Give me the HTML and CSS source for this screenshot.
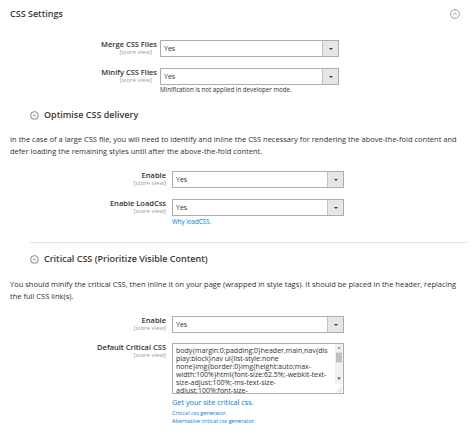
FILE: index.html
```html
<!DOCTYPE html>
<html lang="en">
<head>
<meta charset="utf-8">
<title>CSS Settings</title>
<link rel="stylesheet" href="styles.css">
</head>
<body>
<div class="page">
  <div class="section-head">
    <h2 class="section-title">CSS Settings</h2>
    <span class="toggle toggle-lg"><svg viewBox="0 0 10 10"><circle cx="5" cy="5" r="4.4"/><polyline points="3.3,5.8 5,4.1 6.7,5.8"/></svg></span>
  </div>

  <div class="fields fields-top">
    <div class="field">
      <div class="label"><span class="label-text">Merge CSS Files</span><span class="scope">[store view]</span></div>
      <div class="control">
        <div class="select"><span class="select-value">Yes</span><span class="select-arrow"></span></div>
      </div>
    </div>
    <div class="field">
      <div class="label"><span class="label-text">Minify CSS Files</span><span class="scope">[store view]</span></div>
      <div class="control">
        <div class="select"><span class="select-value">Yes</span><span class="select-arrow"></span></div>
        <p class="note">Minification is not applied in developer mode.</p>
      </div>
    </div>
  </div>

  <div class="sub-head sub-head-first">
    <span class="toggle toggle-sm"><svg viewBox="0 0 10 10"><circle cx="5" cy="5" r="4.3"/><polyline points="3.3,5.9 5,4.2 6.7,5.9"/></svg></span>
    <h3 class="sub-title">Optimise CSS delivery</h3>
  </div>
  <p class="desc">In the case of a large CSS file, you will need to identify and inline the CSS necessary for rendering the above-the-fold content and<br>defer loading the remaining styles until after the above-the-fold content.</p>

  <div class="fields fields-sub">
    <div class="field">
      <div class="label"><span class="label-text">Enable</span><span class="scope">[store view]</span></div>
      <div class="control">
        <div class="select"><span class="select-value">Yes</span><span class="select-arrow"></span></div>
      </div>
    </div>
    <div class="field">
      <div class="label"><span class="label-text">Enable LoadCss</span><span class="scope">[store view]</span></div>
      <div class="control">
        <div class="select"><span class="select-value">Yes</span><span class="select-arrow"></span></div>
        <a class="link note-link" href="#">Why loadCSS.</a>
      </div>
    </div>
  </div>

  <div class="divider"></div>

  <div class="sub-head sub-head-second">
    <span class="toggle toggle-sm"><svg viewBox="0 0 10 10"><circle cx="5" cy="5" r="4.3"/><polyline points="3.3,5.9 5,4.2 6.7,5.9"/></svg></span>
    <h3 class="sub-title">Critical CSS (Prioritize Visible Content)</h3>
  </div>
  <p class="desc desc-second">You should minify the critical CSS, then inline it on your page (wrapped in style tags). It should be placed in the header, replacing<br>the full CSS link(s).</p>

  <div class="fields fields-sub">
    <div class="field">
      <div class="label"><span class="label-text">Enable</span><span class="scope">[store view]</span></div>
      <div class="control">
        <div class="select"><span class="select-value">Yes</span><span class="select-arrow"></span></div>
      </div>
    </div>
    <div class="field field-gap">
      <div class="label"><span class="label-text">Default Critical CSS</span><span class="scope">[store view]</span></div>
      <div class="control">
        <div class="textarea">
          <div class="textarea-text">body{margin:0;padding:0}header,main,nav{dis<br>play:block}nav ul{list-style:none<br>none}img{border:0}img{height:auto;max-<br>width:100%}html{font-size:62.5%;-webkit-text-<br>size-adjust:100%;-ms-text-size-<br>adjust:100%;font-size-</div>
          <svg class="scrollbar" viewBox="0 0 8 49" preserveAspectRatio="none">
            <rect x="0" y="0" width="8" height="40" fill="#f1f1f1"/>
            <polygon points="2.2,4.8 4,2.6 5.8,4.8" fill="#8a8a8a"/>
            <rect x="1" y="8.5" width="6" height="10" fill="#c1c1c1"/>
            <polygon points="2.2,33.6 5.8,33.6 4,35.8" fill="#505050"/>
            <line x1="7.5" y1="42.5" x2="1.5" y2="48.5" stroke="#b5b5b5" stroke-width="0.7"/>
            <line x1="7.5" y1="45.5" x2="4.5" y2="48.5" stroke="#b5b5b5" stroke-width="0.7"/>
          </svg>
        </div>
        <a class="link get-link" href="#">Get your site critical css.</a>
        <div class="small-links">
          <a class="link" href="#">Critical css generator.</a>
          <a class="link" href="#">Alternative critical css generator</a>
        </div>
      </div>
    </div>
  </div>
</div>
</body>
</html>
```

FILE: styles.css
```css
* { box-sizing: border-box; }

body {
  margin: 0;
  background: #ffffff;
  font-family: "Open Sans", "Liberation Sans", sans-serif;
  color: #303030;
}

.page {
  padding: 0 14px 0 10px;
}

.section-head {
  height: 28px;
  display: flex;
  align-items: center;
  justify-content: space-between;
}

.section-title {
  margin: 0;
  font-size: 9px;
  font-weight: 600;
  line-height: 12px;
  color: #41362f;
}

.toggle {
  display: block;
  flex: none;
}

.toggle svg {
  display: block;
  width: 100%;
  height: 100%;
}

.toggle circle,
.toggle polyline {
  fill: none;
  stroke: #8a8a8a;
  stroke-width: 0.8;
}

.toggle-lg {
  width: 10px;
  height: 10px;
}

.toggle-sm {
  width: 9px;
  height: 9px;
}

.toggle-sm circle,
.toggle-sm polyline {
  stroke: #6b6b6b;
  stroke-width: 0.9;
}

.fields {
  display: flex;
  flex-direction: column;
  gap: 11px;
}

.fields-top {
  margin-top: 12px;
}

.field {
  display: grid;
  align-items: start;
}

.fields-top .field {
  grid-template-columns: 147px 179px;
  column-gap: 3px;
}

.fields-sub .field {
  grid-template-columns: 156px 172px;
  column-gap: 6px;
}

.fields-sub .field-gap {
  margin-top: -1px;
}

.label {
  text-align: right;
}

.label-text {
  display: block;
  font-size: 7.5px;
  font-weight: 600;
  line-height: 9px;
  color: #303030;
}

.scope {
  display: block;
  font-size: 6px;
  line-height: 7px;
  color: #9a9a9a;
}

.fields-top .scope {
  padding-right: 5px;
}

.select {
  height: 17px;
  border: 1px solid #adadad;
  display: flex;
  align-items: center;
  background: #ffffff;
}

.select-value {
  flex: 1;
  padding-left: 3px;
  font-size: 7px;
  line-height: 9px;
  color: #303030;
}

.select-arrow {
  width: 16px;
  align-self: stretch;
  border-left: 1px solid #c2c2c2;
  background: #e6e6e6;
  display: flex;
  align-items: center;
  justify-content: center;
}

.select-arrow::after {
  content: "";
  display: block;
  border-left: 2px solid transparent;
  border-right: 2px solid transparent;
  border-top: 2.5px solid #41362f;
}

.note {
  margin: 1px 0 0;
  font-size: 6.2px;
  line-height: 8px;
  color: #303030;
  white-space: nowrap;
}

.sub-head {
  margin-left: 20px;
  height: 12px;
  display: flex;
  align-items: center;
  gap: 5px;
}

.sub-head-first {
  margin-top: 15px;
}

.sub-head-second {
  margin-top: 10px;
}

.sub-title {
  margin: 0;
  font-size: 9px;
  font-weight: 600;
  line-height: 12px;
  color: #41362f;
}

.desc {
  margin: 12px 0 14px;
  font-size: 7.5px;
  line-height: 12px;
  color: #303030;
  white-space: nowrap;
}

.desc-second {
  margin-top: 13px;
}

.link {
  color: #007bdb;
  text-decoration: none;
}

.note-link {
  display: block;
  margin-top: 2px;
  font-size: 6.2px;
  line-height: 8px;
}

.divider {
  margin: 16px -7px 0 20px;
  height: 1px;
  background: #e3e3e3;
}

.textarea {
  position: relative;
  height: 51px;
  border: 1px solid #adadad;
  padding: 3px 10px 0 3px;
  overflow: hidden;
  background: #ffffff;
}

.textarea-text {
  font-size: 7px;
  line-height: 8.1px;
  color: #303030;
  white-space: nowrap;
}

.scrollbar {
  position: absolute;
  top: 0;
  right: 0;
  width: 8px;
  height: 49px;
}

.get-link {
  display: block;
  margin-top: 3px;
  font-size: 7.3px;
  line-height: 10px;
}

.small-links {
  margin-top: 2px;
  font-size: 5.5px;
  line-height: 8px;
}

.small-links .link {
  display: block;
}
```
